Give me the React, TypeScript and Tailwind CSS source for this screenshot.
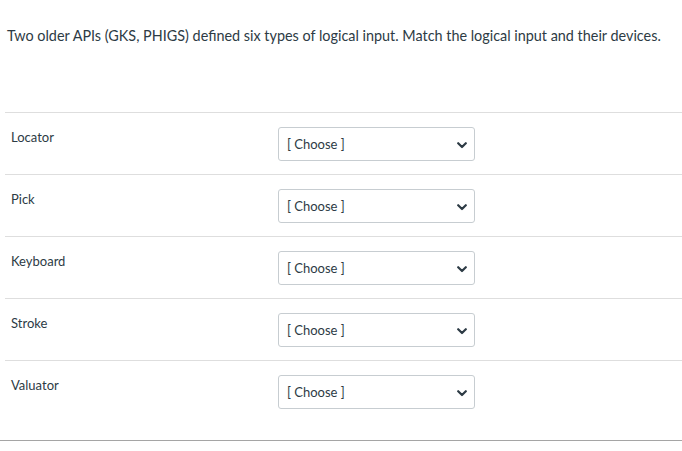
import React from "react";

const items = ["Locator", "Pick", "Keyboard", "Stroke", "Valuator"];

function Chevron() {
  return (
    <svg width="10" height="7" viewBox="0 0 10 7" className="absolute right-[7px] top-[14px]">
      <path d="M1.2 1.2 L5 5 L8.8 1.2" fill="none" stroke="#2d3b45" strokeWidth="2.2" strokeLinecap="round" strokeLinejoin="round" />
    </svg>
  );
}

export default function App() {
  return (
    <div className="bg-white w-[682px] h-[451px] overflow-hidden" style={{ fontFamily: "Lato, 'Open Sans', sans-serif" }}>
      <div className="pl-[7px] pt-[27px] text-[14.4px] leading-[18px] text-[#2d3b45] whitespace-nowrap">
        Two older APIs (GKS, PHIGS) defined six types of logical input. Match the logical input and their devices.
      </div>
      <div className="ml-[5px] mt-[67px]">
        {items.map((it) => (
          <div key={it} className="flex items-start border-t border-[#dedede] pt-[14px] pb-[13px]">
            <div className="w-[273px] pl-[6px] text-[13px] leading-[20px] text-[#2d3b45]">{it}</div>
            <div className="relative w-[197px] h-[34px] border border-[#c7cdd1] rounded-[3px] bg-white">
              <span className="absolute left-[8px] top-[7px] text-[13px] leading-[18px] text-[#2d3b45]">[ Choose ]</span>
              <Chevron />
            </div>
          </div>
        ))}
      </div>
      <div className="mt-[18px] border-t border-[#a5a5a5]" />
    </div>
  );
}
